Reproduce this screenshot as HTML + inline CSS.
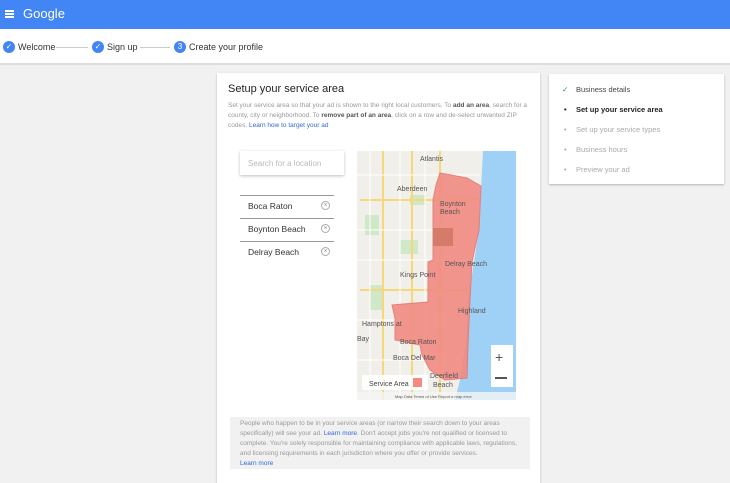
<!DOCTYPE html>
<html><head><meta charset="utf-8"><style>
*{margin:0;padding:0;box-sizing:border-box}
body{width:730px;height:478px;overflow:hidden;background:#f1f1f1;font-family:"Liberation Sans",Arial,sans-serif;position:relative;color:#333}
.hdr{position:absolute;left:0;top:0;width:730px;height:29px;background:#4285f4}
.step{position:absolute;left:0;top:29px;width:730px;height:36px;background:#fff;border-bottom:2px solid #ddd}
.c{position:absolute;width:12px;height:12px;border-radius:50%;background:#4285f4;color:#fff;font-size:8px;text-align:center;line-height:12px;top:12px}
.st{position:absolute;top:13px;font-size:9px;color:#333}
.ln{position:absolute;top:18px;height:1px;background:#ccc}
.card{position:absolute;background:#fff;box-shadow:0 1px 2px rgba(0,0,0,.25)}
.row{position:absolute;left:240px;width:94px;height:23px;border-top:1px solid #999;font-size:8.5px;color:#333;padding:5px 0 0 8px}
.x{position:absolute;right:4px;top:5px;width:9px;height:9px;border:1px solid #aaa;border-radius:50%;font-size:7px;line-height:7px;text-align:center;color:#999}
.side div{position:absolute;left:27px;font-size:7.5px;color:#aaa}
.side span{position:absolute;left:-12px}
</style></head><body>
<div class="hdr">
<div style="position:absolute;left:5px;top:10px;width:9px;height:1.5px;background:#fff;box-shadow:0 3px 0 #fff,0 6px 0 #fff"></div>
<div style="position:absolute;left:23px;top:6px;color:#fff;font-size:13px">Google</div>
</div>
<div class="step">
<div class="c" style="left:3px">✓</div><div class="st" style="left:18px">Welcome</div>
<div class="ln" style="left:56px;width:32px"></div>
<div class="c" style="left:92px">✓</div><div class="st" style="left:107px">Sign up</div>
<div class="ln" style="left:140px;width:30px"></div>
<div class="c" style="left:174px">3</div><div class="st" style="left:189px">Create your profile</div>
</div>
<div class="card" style="left:217px;top:73px;width:323px;height:410px"></div>
<div style="position:absolute;left:228px;top:83px;font-size:11px;color:#222">Setup your service area</div>
<div style="position:absolute;left:228px;top:101px;width:305px;font-size:6.5px;line-height:10px;color:#999">Set your service area so that your ad is shown to the right local customers. To <b style="color:#555">add an area</b>, search for a county, city or neighborhood. To <b style="color:#555">remove part of an area</b>, click on a row and de-select unwanted ZIP codes. <span style="color:#3367d6">Learn how to target your ad</span></div>
<div style="position:absolute;left:240px;top:151px;width:104px;height:24px;background:#fff;box-shadow:0 1px 3px rgba(0,0,0,.25);font-size:8px;color:#bbb;padding:8px 0 0 8px">Search for a location</div>
<div class="row" style="top:195px">Boca Raton<div class="x">×</div></div>
<div class="row" style="top:218px">Boynton Beach<div class="x">×</div></div>
<div class="row" style="top:241px">Delray Beach<div class="x">×</div></div>
<svg style="position:absolute;left:357px;top:151px" width="159" height="249" viewBox="357 151 159 249">
<rect x="357" y="151" width="159" height="249" fill="#f0efea"/>
<path d="M483 151 L516 151 L516 400 L455 400 L460 380 L466 340 L468 300 L474 262 L479 230 L481 190 Z" fill="#9fd0f5"/>
<g fill="#cfe8c8"><rect x="365" y="215" width="14" height="20"/><rect x="400" y="240" width="18" height="14"/><rect x="370" y="285" width="12" height="25"/><rect x="410" y="195" width="15" height="10"/></g>
<g stroke="#f6d87a" stroke-width="2" fill="none"><path d="M383 151V400M412 151V400M360 200H480M360 290H470M440 151V400"/></g>
<g stroke="#fff" stroke-width="1" fill="none"><path d="M357 175H480M357 230H475M357 260H470M357 320H465M357 360H460M400 151V400M425 151V400M370 151V400"/></g>
<path d="M440 173 467 178 481 186 479 230 472 262 470 300 468 345 467 378 445 380 430 370 422 355 420 345 395 340 395 318 392 305 428 302 428 262 433 260 433 200 436 185Z" fill="#f28b82" stroke="#e57373" stroke-width="1" opacity=".9"/>
<rect x="433" y="228" width="20" height="18" fill="#d67a6a"/>
<g font-size="7" fill="#555" font-family="Liberation Sans"><text x="397" y="191">Aberdeen</text><text x="440" y="206">Boynton</text><text x="440" y="214">Beach</text><text x="445" y="266">Delray Beach</text><text x="400" y="277">Kings Point</text><text x="400" y="344">Boca Raton</text><text x="393" y="360">Boca Del Mar</text><text x="430" y="378">Deerfield</text><text x="433" y="387">Beach</text><text x="458" y="313">Highland</text><text x="420" y="161">Atlantis</text><text x="362" y="326">Hamptons at</text><text x="357" y="341">Bay</text></g>
<rect x="491" y="345" width="22" height="42" fill="#fff"/>
<text x="495" y="362" font-size="14" fill="#555" font-family="Liberation Sans">+</text>
<rect x="495" y="377" width="12" height="2" fill="#555"/>
<rect x="362" y="375" width="66" height="15" fill="#fff" opacity=".9"/>
<text x="369" y="386" font-size="7" fill="#444" font-family="Liberation Sans">Service Area</text>
<rect x="413" y="378" width="9" height="9" fill="#f28b82"/>
<rect x="357" y="392" width="159" height="8" fill="#f5f5f5" opacity=".8"/>
<text x="395" y="398" font-size="4" fill="#555">Map Data   Terms of Use   Report a map error</text>
</svg>
<div style="position:absolute;left:230px;top:417px;width:300px;height:52px;background:#f1f1f1;padding:2px 8px 0 10px;font-size:6.5px;line-height:10px;color:#999">People who happen to be in your service areas (or narrow their search down to your areas specifically) will see your ad. <span style="color:#3367d6">Learn more</span>. Don't accept jobs you're not qualified or licensed to complete. You're solely responsible for maintaining compliance with applicable laws, regulations, and licensing requirements in each jurisdiction where you offer or provide services.<br><span style="color:#3367d6">Learn more</span></div>
<div class="card side" style="left:549px;top:74px;width:175px;height:110px">
<div style="top:11px;color:#444"><span style="color:#0f9d58;left:-14px">✓</span>Business details</div>
<div style="top:31px;color:#222;font-weight:bold"><span>•</span>Set up your service area</div>
<div style="top:51px"><span>•</span>Set up your service types</div>
<div style="top:71px"><span>•</span>Business hours</div>
<div style="top:91px"><span>•</span>Preview your ad</div>
</div>
</body></html>
